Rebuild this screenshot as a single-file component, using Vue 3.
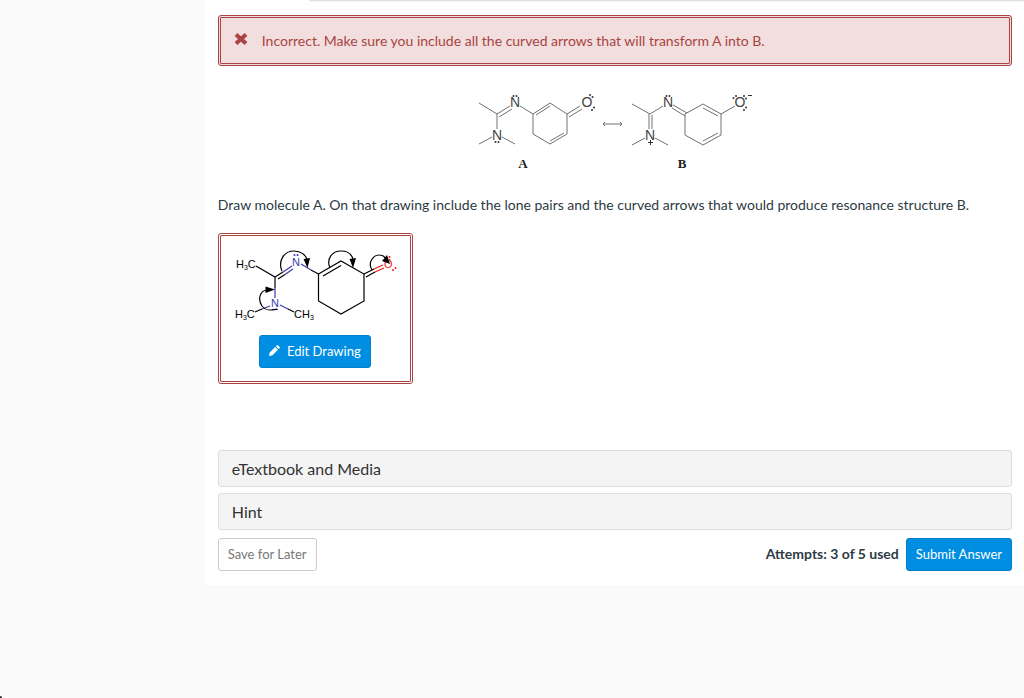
<script setup>
    import { ref } from 'vue';

    const used = ref(3)
    const allowed = ref(5)
    const sections = ref(['eTextbook and Media', 'Hint'])
</script>

<template>
    <div class="page">
        <main class="panel">
            <div class="tab_line"></div>

            <div class="alert" role="alert">
                <svg class="cross" width="14" height="14" viewBox="0 0 14 14" aria-hidden="true">
                    <path d="M2 2.500 L12 11.500 M12 2.500 L2 11.500" />
                </svg>
                <span>Incorrect. Make sure you include all the curved arrows that will transform A into B.</span>
            </div>

            <svg class="figure" width="290" height="90" viewBox="0 0 290 90" role="img" aria-label="Resonance structures A and B">
                <g class="thin">
                    <path d="M9 18 L27 29 L40 21 M29 32 L42 24 M27 29 V44 M9 59 L22 52 M32 52 L45 59" />
                    <path d="M50 21 L63 29 L80 18 L97 29 V49 L80 59 L63 49 V29 M66 30 L80 21 M80 56 L94 48" />
                    <path d="M97 29 L110 21 M99 32 L112 24" />
                    <path d="M133 39 H152 M135 37 L133 39 L135 41 M150 37 L152 39 L150 41" />
                    <path d="M162 19 L180 29 L193 21 M179 29 V44 M182 30 V44 M162 60 L175 53 M185 53 L198 60" />
                    <path d="M203 20 L217 28 M202 23 L215 31 M215 29 L233 19 L251 29 V50 L233 60 L215 50 V29 M233 23 L248 31 M233 56 L248 48" />
                    <path d="M251 29 L265 21" />
                </g>
                <g class="atom">
                    <text x="45" y="22">N</text>
                    <text x="27" y="55">N</text>
                    <text x="117" y="22">O</text>
                    <text x="198" y="22">N</text>
                    <text x="180" y="55">N</text>
                    <text x="270" y="22">O</text>
                </g>
                <g class="dots">
                    <circle cx="43.500" cy="11" r="1" /><circle cx="46.500" cy="11" r="1" />
                    <circle cx="25.500" cy="57" r="1" /><circle cx="28.500" cy="57" r="1" />
                    <circle cx="120" cy="10" r="1" /><circle cx="122.500" cy="12" r="1" />
                    <circle cx="122" cy="25" r="1" /><circle cx="124" cy="22.500" r="1" />
                    <circle cx="196.500" cy="11" r="1" /><circle cx="199.500" cy="11" r="1" />
                    <circle cx="263.500" cy="13" r="1" /><circle cx="266" cy="11" r="1" />
                    <circle cx="274" cy="11" r="1" /><circle cx="276" cy="13.500" r="1" />
                    <circle cx="274" cy="25" r="1" /><circle cx="276" cy="22.500" r="1" />
                </g>
                <path class="charge" d="M278 10.500 H282 M178 57.500 H183 M180.500 55 V60" />
                <g class="name">
                    <text x="53" y="83">A</text>
                    <text x="212" y="83">B</text>
                </g>
            </svg>

            <p class="question">Draw molecule A. On that drawing include the lone pairs and the curved arrows that would produce resonance structure B.</p>

            <div class="drawing">
                <svg width="170" height="80" viewBox="0 0 170 80" role="img" aria-label="Your drawing of molecule A">
                    <g class="bond">
                        <path d="M26 21 L45 32 L53 27 M48 34 L55 29.500 M45 32 V43 M25 67 L32 64 M58 64 L64 67 M81 25 L88.500 29" />
                        <path d="M88.500 29 L111 16 L134 29 V56 L111 69 L88.500 56 Z M93 31 L111 20.500" />
                        <path d="M134 29 L144 24 M136 32 L145 27" />
                    </g>
                    <path class="bond blue" d="M53 27 L62 21 M55 29.500 L63 24 M45 43 V53 M32 64 L40 61 M50 60 L58 64 M71 19 L81 25" />
                    <path class="bond red" d="M144 24 L153 20 M145 27 L154 23" />
                    <g class="label">
                        <text x="6" y="23">H<tspan class="sub" dy="2">3</tspan><tspan dy="-2">C</tspan></text>
                        <text x="5" y="73">H<tspan class="sub" dy="2">3</tspan><tspan dy="-2">C</tspan></text>
                        <text x="64" y="73">CH<tspan class="sub" dy="2">3</tspan></text>
                        <text class="blue" x="62" y="21">N</text>
                        <text class="blue" x="41" y="62">N</text>
                        <text class="red" x="154" y="23">O</text>
                    </g>
                    <path class="bond blue" d="M42 64.500 H48" />
                    <g class="blue"><circle cx="64.500" cy="10" r="1" /><circle cx="67.500" cy="10" r="1" /></g>
                    <g class="red">
                        <circle cx="159.500" cy="12" r="1" /><circle cx="159.500" cy="15" r="1" />
                        <circle cx="163" cy="25" r="1" /><circle cx="165.500" cy="23" r="1" />
                    </g>
                    <path class="bond" d="M52 26 C48 17 53 6 64 6 C71 6 76 10 77 15 M100 23 C96 14 102 6 111 6 C118 6 122 9 123 15 M142 25 C137 17 144 10 149 10 C152 10 154 11 155 13 M47 64 C41 66 35 65 32 61 C28 55 29 46 37 45" />
                    <path class="head" d="M73.500 14 L80 13 L77.500 23 Z M119.500 14 L126 13 L123 23 Z M152 16 L157 10 L160 19 Z M35.500 41.500 L35.500 48 L45 44.500 Z" />
                </svg>
                <button class="btn primary edit" type="button">
                    <svg width="11" height="11" viewBox="0 0 11 11" aria-hidden="true">
                        <path d="M0 11 L0.700 7.500 L6.200 2 L9 4.800 L3.500 10.300 Z M6.900 1.300 L8 0.200 Q8.500 -0.200 9 0.300 L10.700 2 Q11.200 2.500 10.800 3 L9.700 4.100 Z" />
                    </svg>
                    Edit Drawing
                </button>
            </div>

            <div class="sections">
                <button v-for="item in sections" :key="item" class="section" type="button">{{ item }}</button>
            </div>

            <footer class="actions">
                <button class="btn save" type="button">Save for Later</button>
                <strong>Attempts: {{ used }} of {{ allowed }} used</strong>
                <button class="btn primary" type="button">Submit Answer</button>
            </footer>
        </main>
        <div class="corner"></div>
    </div>
</template>

<style>
    body{
        margin: 0;
        background-color: #fafafa;
    }
</style>

<style scoped>

    .page{
        padding-left: 20%;
        font-family: Lato, "Liberation Sans", sans-serif;
        font-size: 14px;
        line-height: 20px;
        color: #2d3b45;
    }

    .panel{
        display: flex;
        flex-direction: column;
        padding: 0 12px 14px 13px;
        background-color: #fff;
    }

    .tab_line{
        height: 1px;
        margin: 0 -12px 13px 91px;
        background-color: #e2e2e2;
        border-bottom: 1px solid #f6f6f6;
    }

    .alert{
        display: flex;
        align-items: center;
        gap: 14px;
        padding: 13px 13px 12px;
        border: 3px double #a94442;
        border-radius: 3px;
        background-color: #f2dede;
        color: #a94442;
    }

    .cross{
        margin-bottom: 4px;
    }

    .cross path{
        stroke: #a94442;
        stroke-width: 4;
    }

    .figure{
        align-self: center;
        margin-top: 19px;
    }

    .thin{
        fill: none;
        stroke: #707070;
        stroke-width: 1;
    }

    .atom{
        font-family: "Liberation Sans", sans-serif;
        font-size: 14px;
        text-anchor: middle;
        fill: #444;
    }

    .dots{
        fill: #333;
    }

    .charge{
        stroke: #333;
        stroke-width: 1;
    }

    .name{
        font-family: "Liberation Serif", serif;
        font-size: 13px;
        font-weight: bold;
        text-anchor: middle;
        fill: #222;
    }

    .question{
        margin: 20px 0 18px;
    }

    .drawing{
        display: flex;
        flex-direction: column;
        align-items: center;
        gap: 10px;
        align-self: flex-start;
        padding: 9px 10px 13px 9px;
        border: 3px double #a94442;
        border-radius: 3px;
    }

    .bond{
        fill: none;
        stroke: #000;
        stroke-width: 1.2;
    }

    .bond.blue{
        stroke: #3a3aa8;
    }

    .bond.red{
        stroke: #f01818;
    }

    .label{
        font-family: "Liberation Sans", sans-serif;
        font-size: 11px;
    }

    .sub{
        font-size: 7px;
    }

    .blue{
        fill: #3a3aa8;
    }

    .red{
        fill: #f01818;
    }

    .bond.blue, .bond.red{
        fill: none;
    }

    .btn{
        box-sizing: border-box;
        height: 33px;
        padding: 0 9px 2px;
        border: 1px solid #ccc;
        border-radius: 3px;
        background-color: #fff;
        color: #777;
        font-family: inherit;
        font-size: 13px;
        cursor: pointer;
    }

    .btn.primary{
        border-color: #0081cb;
        background-color: #008ee2;
        color: #fff;
    }

    .edit{
        display: flex;
        align-items: center;
        gap: 7px;
    }

    .edit path{
        fill: #fff;
    }

    .sections{
        display: flex;
        flex-direction: column;
        gap: 6px;
        margin-top: 66px;
    }

    .section{
        padding: 8px 13px;
        border: 1px solid #ddd;
        border-radius: 3px;
        background-color: #f4f4f4;
        color: #333;
        font-family: inherit;
        font-size: 16px;
        line-height: 19px;
        text-align: left;
        cursor: pointer;
    }

    .actions{
        display: flex;
        align-items: center;
        gap: 7px;
        margin-top: 8px;
    }

    .actions strong{
        padding-bottom: 2px;
    }

    .save{
        margin-right: auto;
    }

    .corner{
        position: fixed;
        left: 0;
        bottom: 0;
        width: 2px;
        height: 2px;
        background-color: #222;
        border-top-right-radius: 2px;
    }

</style>
